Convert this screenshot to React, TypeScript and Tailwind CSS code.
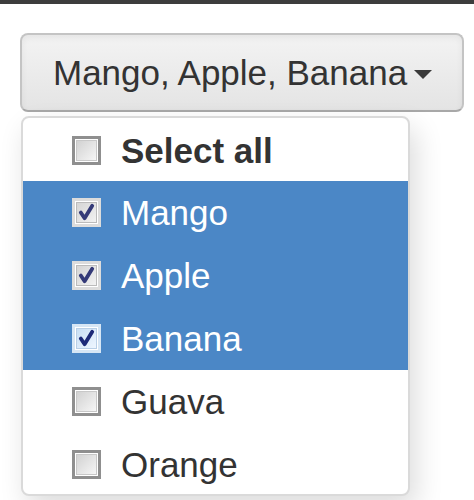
import { useState } from "react";

type Fruit = { label: string; checked: boolean };

const initial: Fruit[] = [
  { label: "Mango", checked: true },
  { label: "Apple", checked: true },
  { label: "Banana", checked: true },
  { label: "Guava", checked: false },
  { label: "Orange", checked: false },
];

export default function App() {
  const [items, setItems] = useState(initial);
  const selected = items.filter((i) => i.checked).map((i) => i.label);
  const allChecked = selected.length === items.length;

  function toggle(idx: number) {
    setItems((prev) => prev.map((it, i) => (i === idx ? { ...it, checked: !it.checked } : it)));
  }

  return (
    <div className="w-[474px] h-[500px] bg-white overflow-hidden font-['Liberation_Sans',Arial,sans-serif] text-[#333]">
      {/* dark strip along the top */}
      <div className="h-[4px] bg-[#3d3d3d]" />

      <div className="flex flex-col pl-[20px] pt-[29px]">
        {/* toggle button */}
        <button
          type="button"
          className="w-[444px] h-[79px] flex items-center pl-[31px] gap-[7px] rounded-[8px] border-2 border-[#c4c4c4] border-b-[#a8a8a8] bg-gradient-to-b from-[#f3f3f3] to-[#e4e4e4] shadow-[inset_0_3px_6px_rgba(0,0,0,0.06)] text-[35px] leading-none text-[#333]"
        >
          <span>{selected.join(", ")}</span>
          <span className="w-0 h-0 mt-[3px] border-l-[9px] border-r-[9px] border-t-[9px] border-l-transparent border-r-transparent border-t-[#3a3a3a]" />
        </button>

        {/* menu */}
        <div className="mt-[4px] ml-[1px] w-[389px] h-[380px] pt-[1px] bg-white border-2 border-[#dadada] rounded-[8px] shadow-[6px_12px_28px_rgba(0,0,0,0.14)] overflow-hidden">
          <Row label="Select all" bold checked={allChecked} active={false} onClick={() => {}} height="h-[62px]" />
          {items.map((it, i) => (
            <Row
              key={it.label}
              label={it.label}
              checked={it.checked}
              active={it.checked}
              focused={i === 2}
              onClick={() => toggle(i)}
              height="h-[63px]"
            />
          ))}
        </div>
      </div>
    </div>
  );
}

function Row({
  label,
  checked,
  active,
  bold,
  focused,
  onClick,
  height,
}: {
  label: string;
  checked: boolean;
  active: boolean;
  bold?: boolean;
  focused?: boolean;
  onClick: () => void;
  height: string;
}) {
  return (
    <div
      onClick={onClick}
      className={`${height} flex items-center pl-[49px] gap-[20px] text-[35px] leading-none cursor-pointer ${
        active ? "bg-[#4b87c6] text-white" : "text-[#333]"
      } ${bold ? "font-bold" : ""}`}
    >
      <Box checked={checked} focused={focused} />
      <span>{label}</span>
    </div>
  );
}

function Box({ checked, focused }: { checked: boolean; focused?: boolean }) {
  return (
    <span
      className={`w-[29px] h-[29px] flex items-center justify-center border-[3px] ${
        checked ? (focused ? "border-[#d6e6f5]" : "border-[#dcdcdc]") : "border-[#8f8f8f]"
      } bg-white`}
    >
      <span
        className={`w-[21px] h-[21px] flex items-center justify-center border ${
          checked
            ? focused
              ? "border-[#b9cfe6] bg-gradient-to-br from-[#c9dff4] to-[#eef6ff]"
              : "border-[#bbb] bg-gradient-to-br from-[#d5d5d5] to-[#f2f2f2]"
            : "border-[#c8c8c8] bg-gradient-to-br from-[#d2d2d2] to-[#f6f6f6]"
        }`}
      >
        {checked && (
          <svg viewBox="0 0 20 20" className="w-[19px] h-[19px]" aria-hidden>
            <path
              d="M4 10 L8 16 L16 3"
              fill="none"
              stroke={focused ? "#1d2a78" : "#343a78"}
              strokeWidth="4"
              strokeLinecap="round"
              strokeLinejoin="round"
            />
          </svg>
        )}
      </span>
    </span>
  );
}
